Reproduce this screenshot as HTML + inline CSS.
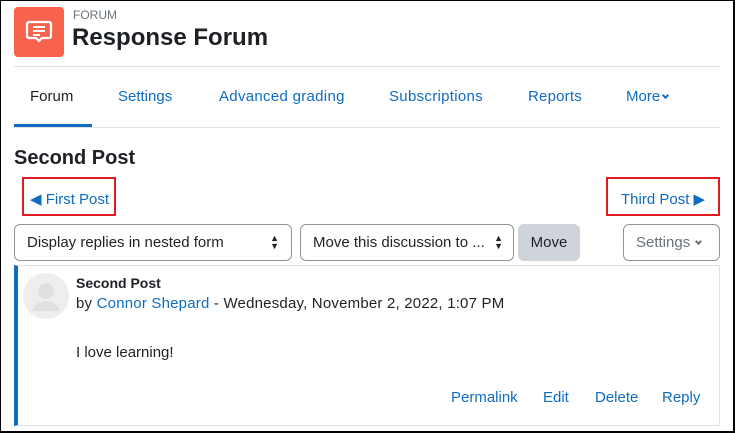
<!DOCTYPE html>
<html><head><meta charset="utf-8"><style>
*{box-sizing:border-box;margin:0;padding:0}
body{width:735px;height:433px;overflow:hidden;background:#fff;font-family:"Liberation Sans",Arial,sans-serif;color:#1d2125;position:relative}
.frame{position:absolute;left:0;top:0;width:735px;height:433px;border:1px solid #000;border-right-width:2px;border-bottom-width:2px}
.abs{position:absolute;white-space:nowrap}
a,.link{color:#0f6cbf}
.icon{position:absolute;left:14px;top:7px;width:50px;height:50px;background:#f7634d;border-radius:4px}
.hr{position:absolute;left:14px;width:706px;height:1px;background:#dee2e6}
.nav{position:absolute;top:88px;font-size:15px;color:#0f6cbf}
.sel{position:absolute;top:224px;height:37px;border:1px solid #8f959e;border-radius:6px;font-size:15px;padding:9px 12px;color:#1d2125}
.red{position:absolute;border:2px solid #e21b23}
.chev{display:inline-block;width:6px;height:6px;border-right:2px solid currentColor;border-bottom:2px solid currentColor;transform:rotate(45deg);margin:0 0 3px 3px}
</style></head><body>
<div class="icon"><svg width="50" height="50" viewBox="0 0 50 50"><path d="M15 15h20a2 2 0 0 1 2 2v12a2 2 0 0 1-2 2h-7l-3 3-3-3h-7a2 2 0 0 1-2-2V17a2 2 0 0 1 2-2z" fill="none" stroke="#fff" stroke-width="2.2"/><path d="M19 20h12M19 24h12M19 28h7" stroke="#fff" stroke-width="2"/></svg></div>
<div class="abs" style="left:73px;top:8px;font-size:12px;color:#6a737b">FORUM</div>
<div class="abs" style="left:72px;top:24px;font-size:24px;font-weight:bold;color:#1d2125">Response Forum</div>
<div class="hr" style="top:66px"></div>
<div class="nav" style="left:30px;color:#1d2125">Forum</div>
<div class="nav" style="left:118px">Settings</div>
<div class="nav" style="left:219px;letter-spacing:0.3px">Advanced grading</div>
<div class="nav" style="left:389px;letter-spacing:0.3px">Subscriptions</div>
<div class="nav" style="left:528px;letter-spacing:0.2px">Reports</div>
<div class="nav" style="left:626px">More<span class="chev" style="width:5px;height:5px"></span></div>
<div style="position:absolute;left:14px;top:124px;width:78px;height:3px;background:#0f6cbf"></div>
<div class="hr" style="top:127px"></div>
<div class="abs" style="left:14px;top:147px;font-size:20px;font-weight:bold">Second Post</div>
<div class="red" style="left:22px;top:177px;width:94px;height:39px"></div>
<div class="abs link" style="left:30px;top:190px;font-size:15px">◀ First Post</div>
<div class="red" style="left:606px;top:177px;width:114px;height:39px"></div>
<div class="abs link" style="left:621px;top:190px;font-size:15px">Third Post ▶</div>
<div class="sel" style="left:14px;width:278px">Display replies in nested form<span style="position:absolute;right:12px;top:9px;font-size:9px;line-height:8px">▲<br>▼</span></div>
<div class="sel" style="left:300px;width:214px">Move this discussion to ...<span style="position:absolute;right:10px;top:9px;font-size:9px;line-height:8px">▲<br>▼</span></div>
<div class="abs" style="left:518px;top:224px;width:62px;height:37px;background:#ced4da;border-radius:6px;font-size:15px;text-align:center;line-height:37px">Move</div>
<div class="sel" style="left:623px;width:97px;color:#6a737b">Settings<span class="chev" style="width:5px;height:5px;margin-left:6px"></span></div>
<div style="position:absolute;left:14px;top:265px;width:706px;height:161px;border:1px solid #dee2e6;border-left:4px solid #0f6cbf"></div>
<svg class="abs" style="left:23px;top:273px" width="46" height="46" viewBox="0 0 46 46"><circle cx="23" cy="23" r="23" fill="#eee"/><circle cx="23" cy="18" r="8" fill="#e0e0e0"/><path d="M9 38c3-8 9-10 14-10s11 2 14 10z" fill="#e0e0e0"/></svg>
<div class="abs" style="left:76px;top:275px;font-size:14px;font-weight:bold">Second Post</div>
<div class="abs" style="left:76px;top:295px;font-size:15px;letter-spacing:0.2px">by <a>Connor Shepard</a> - Wednesday, November 2, 2022, 1:07 PM</div>
<div class="abs" style="left:76px;top:344px;font-size:15px">I love learning!</div>
<div class="abs link" style="left:451px;top:389px;font-size:15px">Permalink</div>
<div class="abs link" style="left:543px;top:389px;font-size:15px">Edit</div>
<div class="abs link" style="left:595px;top:389px;font-size:15px">Delete</div>
<div class="abs link" style="left:662px;top:389px;font-size:15px">Reply</div>
<div class="frame"></div>
</body></html>
